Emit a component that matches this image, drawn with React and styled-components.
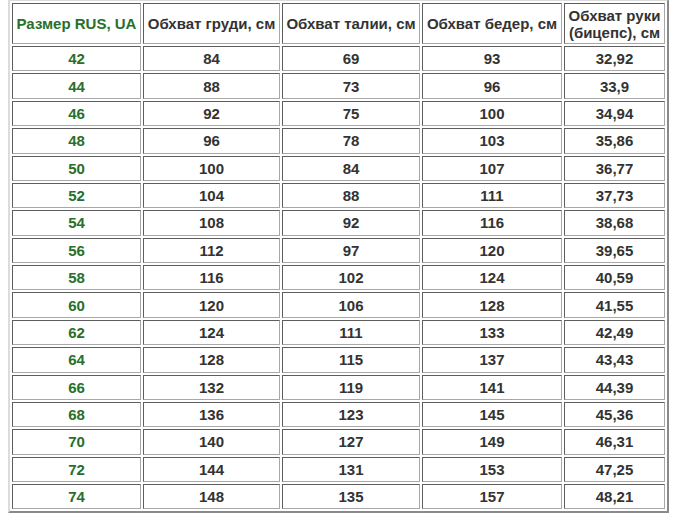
import React from 'react';
import styled, { createGlobalStyle } from 'styled-components';

const GlobalStyle = createGlobalStyle`
  body {
    margin: 0;
    background: #ffffff;
    font-family: "Liberation Sans", Arial, sans-serif;
  }
`;

const columns = [
  { title: 'Размер RUS, UA', width: 129 },
  { title: 'Обхват груди, см', width: 137 },
  { title: 'Обхват талии, см', width: 138 },
  { title: 'Обхват бедер, см', width: 140 },
  { title: ['Обхват руки', '(бицепс), см'], width: 101 },
];

// size, chest, waist, hips, biceps
const rows = [
  ['42', '84', '69', '93', '32,92'],
  ['44', '88', '73', '96', '33,9'],
  ['46', '92', '75', '100', '34,94'],
  ['48', '96', '78', '103', '35,86'],
  ['50', '100', '84', '107', '36,77'],
  ['52', '104', '88', '111', '37,73'],
  ['54', '108', '92', '116', '38,68'],
  ['56', '112', '97', '120', '39,65'],
  ['58', '116', '102', '124', '40,59'],
  ['60', '120', '106', '128', '41,55'],
  ['62', '124', '111', '133', '42,49'],
  ['64', '128', '115', '137', '43,43'],
  ['66', '132', '119', '141', '44,39'],
  ['68', '136', '123', '145', '45,36'],
  ['70', '140', '127', '149', '46,31'],
  ['72', '144', '131', '153', '47,25'],
  ['74', '148', '135', '157', '48,21'],
];

const SizeTable = styled.table`
  margin: -1px 0 0 8px;
  border-collapse: separate;
  border-spacing: 2px;
  table-layout: fixed;
  border: 2px solid;
  border-color: #dcdcdc #8a8a8a #8a8a8a #dcdcdc;
  background: #ffffff;
  font-size: 15px;
  font-weight: bold;
  color: #333333;
`;

const HeadCell = styled.th`
  box-sizing: border-box;
  width: ${(p) => p.$w}px;
  height: 41px;
  padding: 0 1px;
  text-align: center;
  vertical-align: middle;
  line-height: 17px;
  font-weight: bold;
  color: ${(p) => (p.$accent ? '#28702a' : '#333333')};
  border: 1px solid;
  border-color: #5e5e5e #a8a8a8 #a8a8a8 #5e5e5e;
  white-space: nowrap;
`;

const Row = styled.tr`
  height: 25.375px;
`;

const Cell = styled.td`
  box-sizing: border-box;
  padding: 0 2px;
  text-align: center;
  vertical-align: middle;
  line-height: 17px;
  color: ${(p) => (p.$accent ? '#28702a' : '#333333')};
  border: 1px solid;
  border-color: #5e5e5e #a8a8a8 #a8a8a8 #5e5e5e;
`;

export default function App() {
  return (
    <>
      <GlobalStyle />
      <SizeTable>
        <thead>
          <tr>
            {columns.map((c, i) => (
              <HeadCell key={i} $w={c.width} $accent={i === 0}>
                {Array.isArray(c.title) ? (
                  <>
                    {c.title[0]}
                    <br />
                    {c.title[1]}
                  </>
                ) : (
                  c.title
                )}
              </HeadCell>
            ))}
          </tr>
        </thead>
        <tbody>
          {rows.map((r) => (
            <Row key={r[0]}>
              {r.map((v, i) => (
                <Cell key={i} $accent={i === 0}>
                  {v}
                </Cell>
              ))}
            </Row>
          ))}
        </tbody>
      </SizeTable>
    </>
  );
}
